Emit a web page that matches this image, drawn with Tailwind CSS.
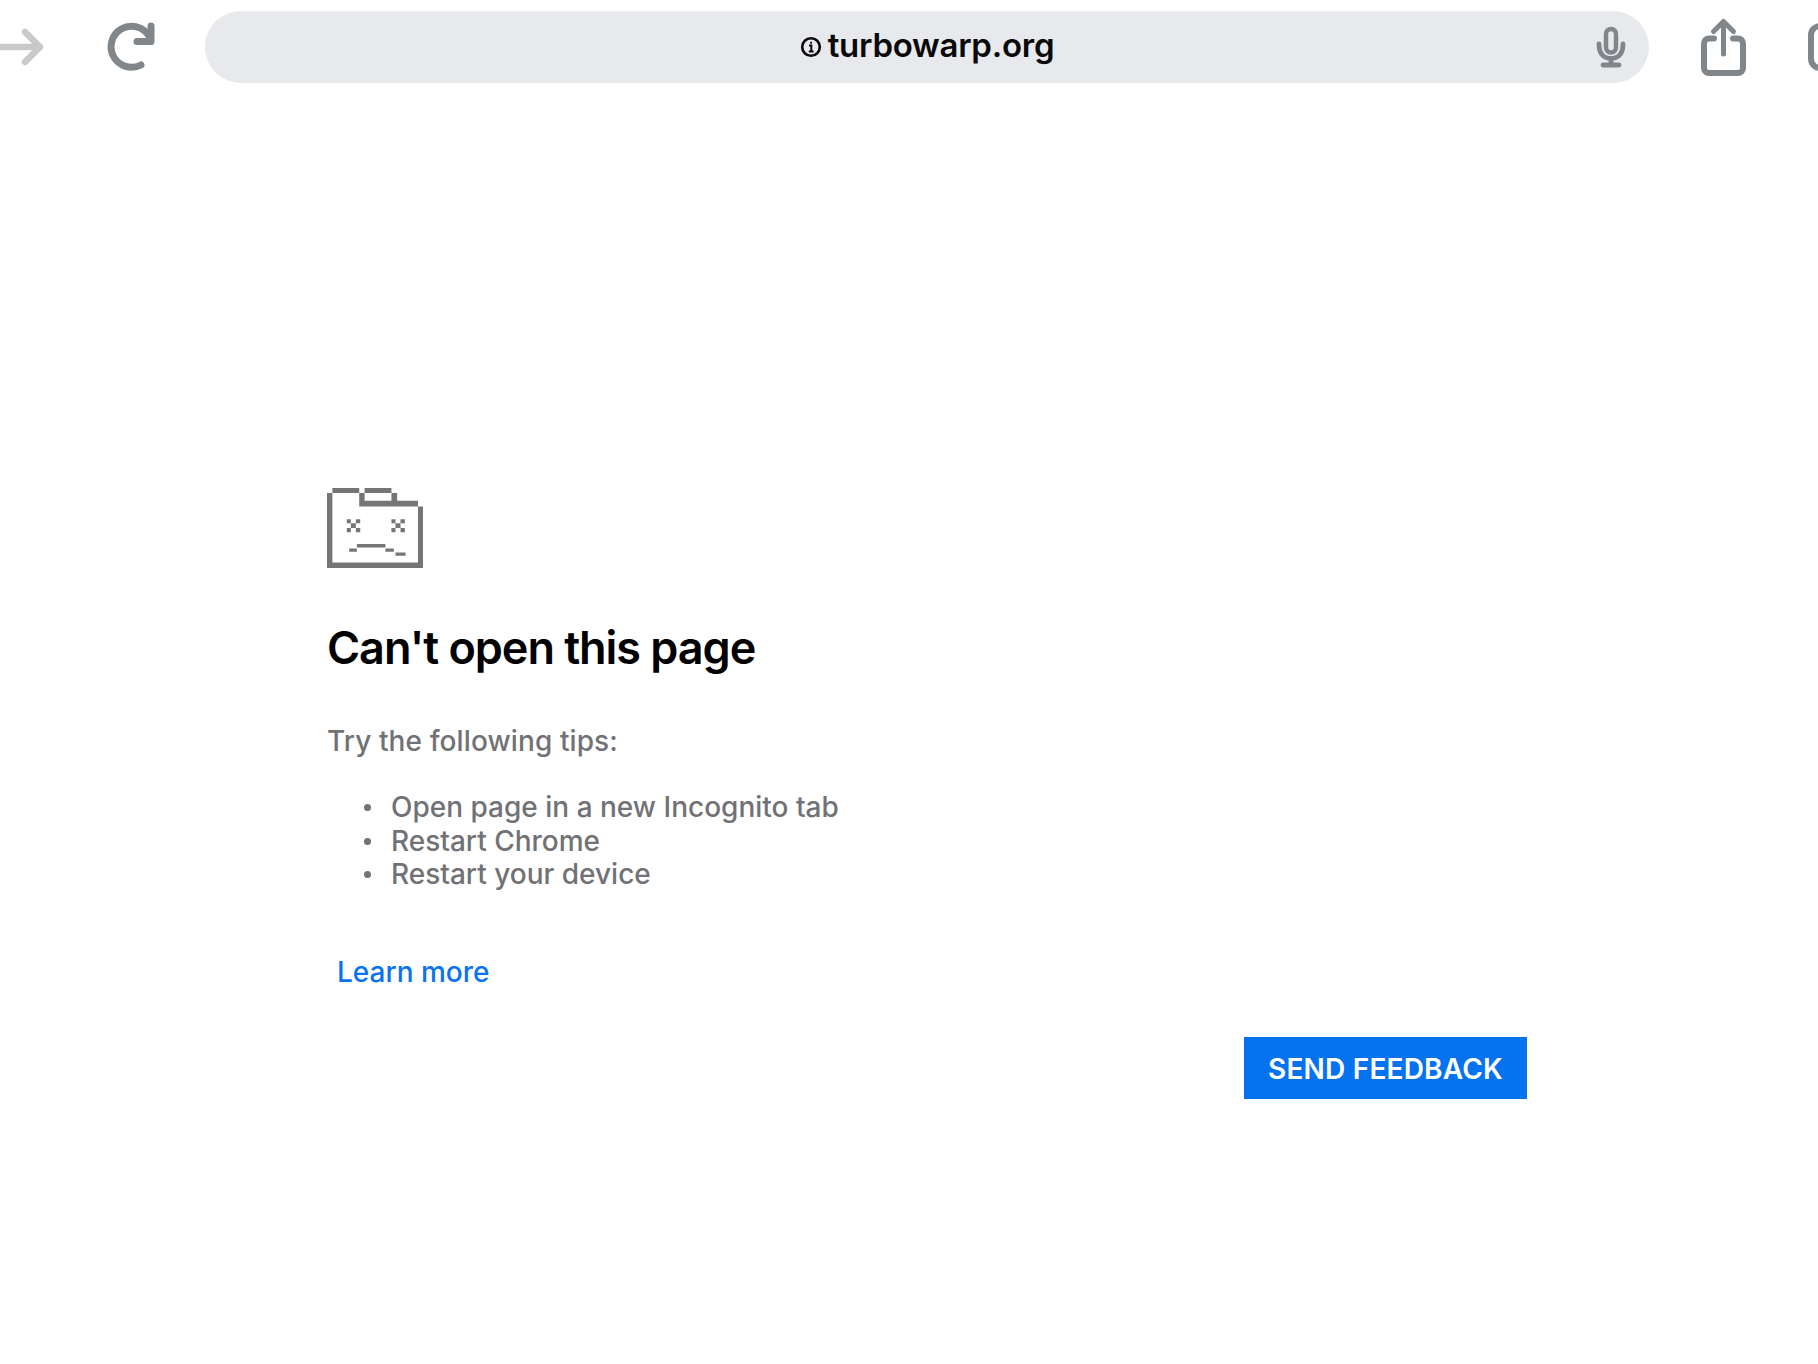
<!DOCTYPE html>
<html lang="en">
<head>
    <meta charset="UTF-8">
    <meta name="viewport" content="width=device-width, initial-scale=1.0">
    <title>turbowarp.org</title>
    <script src="https://cdn.jsdelivr.net/npm/@tailwindcss/browser@4"></script>
</head>
<body class="bg-white overflow-hidden font-[Inter,sans-serif] w-[1818px] h-[1364px]">
    <!-- Toolbar -->
    <header class="flex items-center h-[94px] overflow-hidden">
        <svg class="w-[48px] h-[94px] shrink-0 text-[#c9c9c9]" viewBox="0 0 48 94" fill="none" stroke="currentColor" stroke-width="6.5" stroke-linecap="round" stroke-linejoin="round">
            <path d="M-6 47H40M25 32L40 47L25 62"/>
        </svg>
        <svg class="ml-[57px] w-[52px] h-[94px] shrink-0 text-[#80868a]" viewBox="105 0 52 94" fill="none" stroke="currentColor" stroke-width="7" stroke-linecap="round" stroke-linejoin="round">
            <path d="M141 65A20.500 20.500 0 1 1 149 36"/>
            <path d="M151 26V41.500H137"/>
        </svg>
        <div class="relative ml-[48px] w-[1444px] h-[72px] shrink-0 flex items-center justify-center rounded-full bg-[#e8e9ed]">
            <div class="flex items-center gap-[6px] pb-[5px]">
                <svg class="w-[22px] h-[22px] mt-[5px] text-[#0a0a0a]" viewBox="0 0 22 22" fill="none" stroke="currentColor">
                    <circle cx="11" cy="11" r="8.800" stroke-width="2.600"/>
                    <path d="M9 9.500H11.300V15.500M8.800 15.500H13.600" stroke-width="2"/>
                    <path d="M10.200 6.800H12" stroke-width="2"/>
                </svg>
                <span class="text-[33px] leading-[44px] font-semibold tracking-[-0.25px] text-[#0a0a0a]">turbowarp.org</span>
            </div>
            <svg class="absolute right-[18px] top-[11px] w-[40px] h-[60px] text-[#80868a]" viewBox="1591 22 40 60" fill="none" stroke="currentColor" stroke-linecap="round">
                <rect x="1606" y="29" width="10" height="23.500" rx="5" stroke-width="4.500"/>
                <path d="M1599 44C1599 53 1603 58.500 1611 58.500C1619 58.500 1623 53 1623 44" stroke-width="4.800"/>
                <path d="M1611 59V65M1603 65H1619" stroke-width="4.800"/>
            </svg>
        </div>
        <svg class="ml-[46px] w-[56px] h-[94px] shrink-0 text-[#80868a]" viewBox="1695 0 56 94" fill="none" stroke="currentColor" stroke-linecap="round" stroke-linejoin="round">
            <path d="M1714 38.500H1709A5 5 0 0 0 1704 43.500V68A5 5 0 0 0 1709 73H1738A5 5 0 0 0 1743 68V43.500A5 5 0 0 0 1738 38.500H1733" stroke-width="6"/>
            <path d="M1723.500 22V54M1713.500 31.500L1723.500 21.500L1733.500 31.500" stroke-width="5"/>
        </svg>
        <div class="ml-[57px] w-[50px] h-[48px] shrink-0 rounded-[12px] border-[6px] border-[#80868a]"></div>
    </header>

    <!-- Error content -->
    <main class="pl-[327px] pt-[394px] w-[1527px]">
        <svg class="w-[96px] h-[80px] text-[#757575]" viewBox="36 40 286 238" fill="currentColor">
            <path d="M52 40H132V55H52ZM148 40H228V55H148ZM36 55H52V262H307V95H322V278H36Z"/>
            <path d="M132 55H148V78H228V55H245V78H307V95H132Z"/>
            <path d="M95 133H107V145H95ZM122 133H135V145H122ZM107 145H122V159H107ZM95 159H107V172H95ZM122 159H135V172H122Z"/>
            <path d="M228 133H240V145H228ZM255 133H268V145H255ZM240 145H255V159H240ZM228 159H240V172H228ZM255 159H268V172H255Z"/>
            <path d="M102 220H125V230H102ZM125 207H210V217H125ZM210 220H235V230H210ZM240 232H270V242H240Z"/>
        </svg>
        <h1 class="mt-[52px] text-[45px] leading-[56px] font-semibold tracking-[-1.05px] text-black">Can't open this page</h1>
        <p class="mt-[48px] text-[28px] leading-[34px] font-medium tracking-[0.1px] text-[#717275]">Try the following tips:</p>
        <ul class="mt-[33px] pl-[37px] text-[28px] leading-[33.500px] font-medium text-[#717275]">
            <li class="flex items-center gap-[20px]"><span class="w-[7px] h-[7px] rounded-full bg-[#717275]"></span>Open page in a new Incognito tab</li>
            <li class="flex items-center gap-[20px]"><span class="w-[7px] h-[7px] rounded-full bg-[#717275]"></span>Restart Chrome</li>
            <li class="flex items-center gap-[20px]"><span class="w-[7px] h-[7px] rounded-full bg-[#717275]"></span>Restart your device</li>
        </ul>
        <a class="block mt-[63px] ml-[10px] text-[28px] leading-[34px] font-medium text-[#0a73f0]" href="#">Learn more</a>
        <div class="flex justify-end mt-[48px]">
            <button class="w-[283px] h-[62px] pt-[2px] bg-[#0573f0] text-white text-[28px] tracking-[0.2px] font-semibold">SEND FEEDBACK</button>
        </div>
    </main>
</body>
</html>
